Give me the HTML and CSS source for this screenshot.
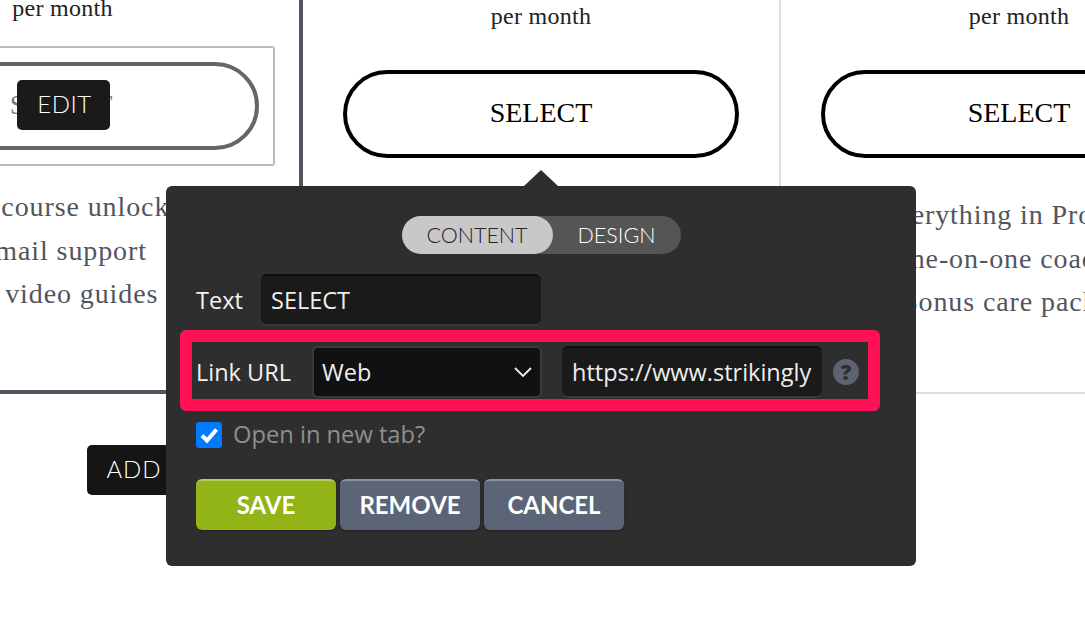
FILE: index.html
```html
<!DOCTYPE html>
<html lang="en">
<head>
  <meta charset="UTF-8">
  <meta name="viewport" content="width=device-width, initial-scale=1.0">
  <title>Edit button</title>
  <link rel="stylesheet" href="styles.css">
</head>
<body>
  <div class="pricing">
    <div class="plan plan-editing">
      <div class="per-month">per month</div>
      <div class="edit-frame">
        <div class="select-btn select-btn-faded">SELECT</div>
        <div class="edit-tag">EDIT</div>
      </div>
      <ul class="features">
        <li>Full course unlock</li>
        <li>E-mail support</li>
        <li>Pro video guides</li>
      </ul>
    </div>
    <div class="plan">
      <div class="per-month">per month</div>
      <div class="select-btn">SELECT</div>
      <ul class="features">
        <li>Full course unlock</li>
        <li>E-mail support</li>
        <li>Pro video guides</li>
      </ul>
    </div>
    <div class="plan plan-last">
      <div class="per-month">per month</div>
      <div class="select-btn">SELECT</div>
      <ul class="features">
        <li>Everything in Pro, plus</li>
        <li>One-on-one coaching</li>
        <li>Bonus care package</li>
      </ul>
    </div>
  </div>

  <div class="add-tag">ADD</div>

  <div class="popover">
    <div class="popover-arrow"></div>

    <div class="tabs">
      <div class="tab tab-active">CONTENT</div>
      <div class="tab">DESIGN</div>
    </div>

    <div class="form-row">
      <div class="form-label label-text">Text</div>
      <div class="field field-text">SELECT</div>
    </div>

    <div class="form-row link-row">
      <div class="form-label label-link">Link URL</div>
      <div class="field field-select">
        <span>Web</span>
        <svg class="chevron" viewBox="0 0 18 10" width="18" height="10"><path d="M1 1l8 8 8-8" fill="none" stroke="#eee" stroke-width="1.8"/></svg>
      </div>
      <div class="field field-url"><div class="url-clip">https://www.strikingly.com</div></div>
      <div class="help-icon">?</div>
    </div>

    <div class="check-row">
      <span class="checkbox">
        <svg viewBox="0 0 26 26" width="26" height="26"><path d="M6 13.5l5 5 9.5-11" fill="none" stroke="#fff" stroke-width="4"/></svg>
      </span>
      <span class="check-label">Open in new tab?</span>
    </div>

    <div class="actions">
      <div class="btn btn-save">SAVE</div>
      <div class="btn">REMOVE</div>
      <div class="btn">CANCEL</div>
    </div>
  </div>
</body>
</html>
```

FILE: styles.css
```css
html, body {
  margin: 0;
  height: 625px;
  overflow: hidden;
  background: #fff;
}
body {
  position: relative;
  font-family: "Open Sans", sans-serif;
}

/* page behind the popover */
.pricing {
  display: flex;
  margin: -20px 0 0 -175px;
  height: 414px;
}
.plan {
  flex: 0 0 476px;
  padding-top: 24px;
  border-right: 2px solid #ddd;
  border-bottom: 2px solid #ddd;
  font-family: "Liberation Serif", serif;
  text-align: center;
}
.plan-editing {
  flex-basis: 472px;
  padding-top: 16px;
  padding-right: 2px;
  border-right: 4px solid #50555e;
  border-bottom: 4px solid #50555e;
}
.plan-editing .per-month {
  padding-left: 3px;
}
.plan-editing .features {
  padding-right: 8px;
}
.plan-last {
  border-right: none;
}
.per-month {
  height: 24px;
  line-height: 24px;
  font-size: 24px;
  letter-spacing: 0.3px;
  color: #222;
}
.select-btn {
  box-sizing: border-box;
  width: 396px;
  height: 88px;
  margin: 42px auto 35px;
  border: 4px solid #000;
  border-radius: 44px;
  font-size: 28px;
  line-height: 78px;
  color: #000;
}
.select-btn-faded {
  margin: 0 auto;
  border-color: #666;
  color: #777;
}
.edit-frame {
  position: relative;
  box-sizing: border-box;
  width: 428px;
  height: 120px;
  margin: 26px auto 19px;
  padding-top: 14px;
  border: 2px solid #bbb;
  border-radius: 3px;
}
.edit-tag,
.add-tag {
  position: absolute;
  box-sizing: border-box;
  height: 50px;
  background: #1a1a1a;
  border-radius: 5px;
  font-family: Lato, sans-serif;
  font-size: 24px;
  font-weight: 300;
  line-height: 48px;
  letter-spacing: 0.5px;
  color: #fff;
  text-align: center;
}
.edit-tag {
  left: 168px;
  top: 32px;
  width: 93px;
  padding-left: 2px;
}
.add-tag {
  left: 87px;
  top: 445px;
  width: 120px;
  padding-right: 26px;
  letter-spacing: 1px;
  background: #151515;
}
.features {
  list-style: none;
  margin: 0;
  padding: 0;
  font-size: 28px;
  letter-spacing: 0.9px;
  line-height: 43.5px;
  color: #50555e;
  white-space: nowrap;
}

/* popover */
.popover {
  position: absolute;
  left: 166px;
  top: 186px;
  box-sizing: border-box;
  width: 750px;
  height: 380px;
  padding: 30px;
  background: #2e2e2e;
  border-radius: 6px;
  color: #eee;
}
.popover-arrow {
  position: absolute;
  left: 358px;
  top: -16px;
  width: 0;
  height: 0;
  border-left: 17px solid transparent;
  border-right: 17px solid transparent;
  border-bottom: 16px solid #2e2e2e;
}
.tabs {
  display: flex;
  width: 279px;
  height: 38px;
  margin: 0 auto 20px;
  background: #555;
  border-radius: 19px;
  font-family: Lato, sans-serif;
  font-size: 21.5px;
  font-weight: 300;
  line-height: 38px;
  text-align: center;
}
.tab {
  width: 128px;
  color: #fff;
}
.tab-active {
  width: 151px;
  background: #c8c8c8;
  border-radius: 19px;
  color: #222;
}
.form-row {
  display: flex;
  align-items: center;
  height: 52px;
}
.form-label {
  font-size: 23.5px;
  color: #f2f2f2;
}
.label-text {
  width: 65px;
}
.label-link {
  width: 116px;
}
.field {
  box-sizing: border-box;
  height: 52px;
  padding: 0 10px;
  background: #1a1a1a;
  border-top: 2px solid #0c0c0c;
  border-bottom: 2px solid #3a3a3a;
  border-radius: 6px;
  font-size: 23.5px;
  line-height: 48px;
  color: #eee;
  white-space: nowrap;
}
.field-text {
  width: 280px;
}
.field-select {
  display: flex;
  justify-content: space-between;
  align-items: center;
  width: 230px;
  padding: 0 8px;
  background: #111;
  border: 2px solid #3a3a3a;
}
.field-url {
  width: 260px;
  margin-left: 20px;
}
.url-clip {
  overflow: hidden;
}
.help-icon {
  width: 26px;
  height: 26px;
  margin-left: 11px;
  background: #5c6470;
  border-radius: 50%;
  font-size: 21px;
  font-weight: 800;
  line-height: 26px;
  color: #2e2e2e;
  text-align: center;
}
.link-row {
  margin: 4px 6px 11px -16px;
  padding: 4px 4px 1px;
  border: 12px solid #ff1158;
  border-radius: 6px;
  background: #2e2e2e;
}
.check-row {
  display: flex;
  align-items: center;
  height: 26px;
  margin-bottom: 31px;
}
.checkbox {
  display: block;
  width: 26px;
  height: 26px;
  margin-right: 11px;
  background: #007bff;
  border-radius: 3px;
}
.check-label {
  margin-bottom: 3px;
  font-size: 23.7px;
  color: #8f8f8f;
}
.actions {
  display: flex;
  gap: 4px;
}
.btn {
  box-sizing: border-box;
  width: 140px;
  height: 51px;
  background: #5b6577;
  border-top: 2px solid #8a92a0;
  border-radius: 6px;
  box-shadow: 0 1px 2px rgba(0, 0, 0, 0.3);
  font-family: Lato, sans-serif;
  font-size: 24px;
  font-weight: 700;
  line-height: 47px;
  color: #fff;
  text-align: center;
}
.btn-save {
  background: #93b416;
  border-top-color: #b5cb5c;
}
```
